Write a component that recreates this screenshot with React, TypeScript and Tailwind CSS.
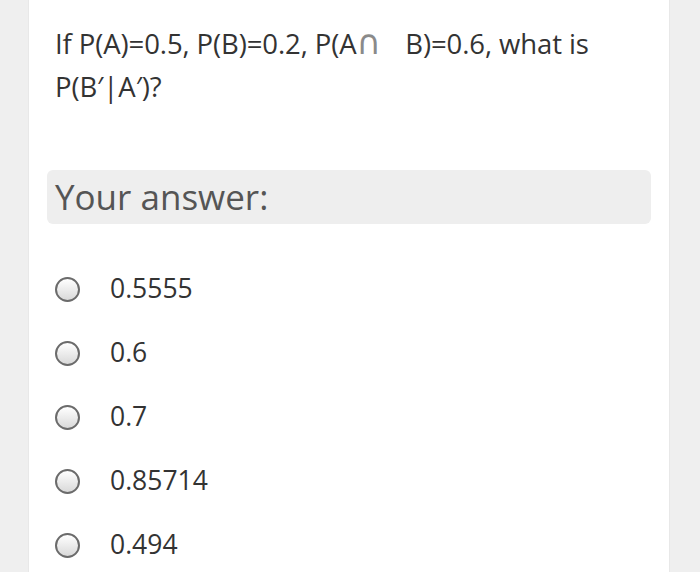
const options = ["0.5555", "0.6", "0.7", "0.85714", "0.494"];

function Radio() {
  return (
    <span className="block w-[25px] h-[25px] rounded-full border-2 border-[#6b6b6b] bg-gradient-to-b from-white to-[#d9d9d9] shrink-0" />
  );
}

export default function App() {
  return (
    <div
      className="flex h-[572px] w-[700px] bg-[#efefef] overflow-hidden"
      style={{ fontFamily: '"Open Sans", "Noto Sans", sans-serif' }}
    >
      <div className="ml-[28px] w-[642px] h-full bg-white border-x border-[#e8e8e8]">
        <div className="pl-[26px] pr-[6px] pt-[22px] text-[27.5px] leading-[43px] tracking-[-0.1px] text-[#333]">
          If P(A)=0.5, P(B)=0.2, P(A
          <span
            className="text-[#8a8a8a] text-[34px] leading-[0]"
            style={{ fontFamily: '"DejaVu Sans", sans-serif' }}
          >
            ∩
          </span>
          <span className="inline-block w-[24px]" />B)=0.6, what is
          <br />
          P(B′|A′)?
        </div>

        <div className="mx-[18px] mt-[62px] h-[54px] rounded-[6px] bg-[#eeeeee] flex items-center pl-[8px] text-[35px] text-[#555]">
          Your answer:
        </div>

        <div className="mt-[33px] pl-[26px] flex flex-col">
          {options.map((o) => (
            <div key={o} className="flex items-center h-[64px]">
              <Radio />
              <span className="ml-[30px] text-[26.5px] text-[#333]">{o}</span>
            </div>
          ))}
        </div>
      </div>
    </div>
  );
}
